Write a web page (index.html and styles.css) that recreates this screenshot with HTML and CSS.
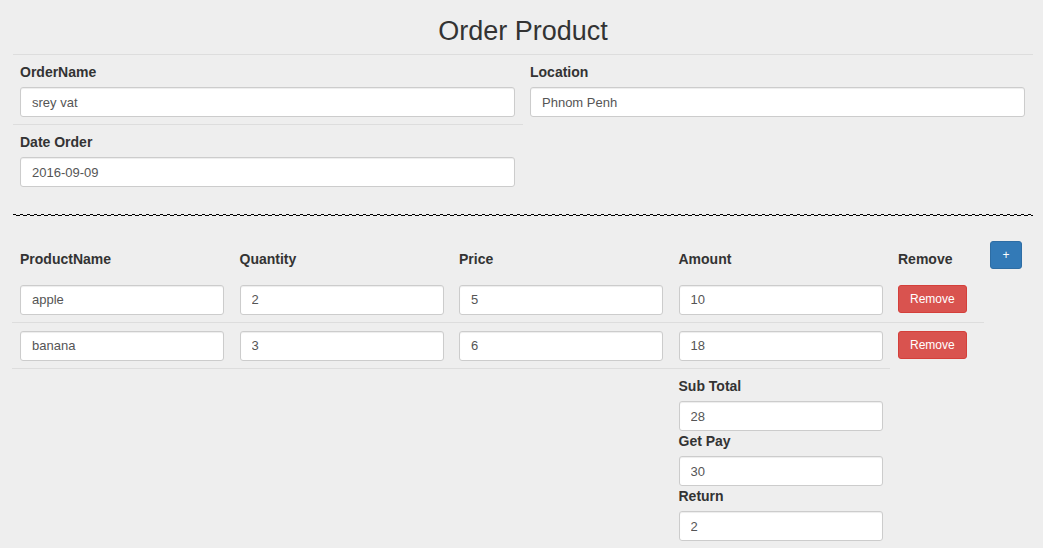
FILE: index.html
```html
<!DOCTYPE html>
<html lang="en">
<head>
<meta charset="utf-8">
<title>Order Product</title>
<link rel="stylesheet" href="styles.css">
</head>
<body>
<div class="page">
  <h2 class="title">Order Product</h2>

  <div class="order-grid">
    <div class="col">
      <div class="field field-sep">
        <label class="lbl">OrderName</label>
        <input class="inp" type="text" value="srey vat">
      </div>
      <div class="field">
        <label class="lbl">Date Order</label>
        <input class="inp" type="text" value="2016-09-09">
      </div>
    </div>
    <div class="col">
      <div class="field">
        <label class="lbl">Location</label>
        <input class="inp" type="text" value="Phnom Penh">
      </div>
    </div>
  </div>

  <div class="wave"></div>

  <div class="items">
    <div class="grid">
      <div class="th">ProductName</div>
      <div class="th">Quantity</div>
      <div class="th">Price</div>
      <div class="th">Amount</div>
      <div class="th">Remove</div>

      <div class="td row1"><input class="inp" type="text" value="apple"></div>
      <div class="td row1"><input class="inp" type="text" value="2"></div>
      <div class="td row1"><input class="inp" type="text" value="5"></div>
      <div class="td row1"><input class="inp" type="text" value="10"></div>
      <div class="td row1"><button class="btn btn-danger" type="button">Remove</button></div>

      <div class="td row2 bl"><input class="inp" type="text" value="banana"></div>
      <div class="td row2 bl"><input class="inp" type="text" value="3"></div>
      <div class="td row2 bl"><input class="inp" type="text" value="6"></div>
      <div class="td row2 bl"><input class="inp" type="text" value="18"></div>
      <div class="td row2"><button class="btn btn-danger" type="button">Remove</button></div>

      <div class="summary">
        <div class="sum-group">
          <label class="lbl">Sub Total</label>
          <input class="inp" type="text" value="28">
        </div>
        <div class="sum-group">
          <label class="lbl">Get Pay</label>
          <input class="inp" type="text" value="30">
        </div>
        <div class="sum-group">
          <label class="lbl">Return</label>
          <input class="inp" type="text" value="2">
        </div>
      </div>
    </div>
    <button class="btn btn-primary add" type="button">+</button>
  </div>
</div>
</body>
</html>
```

FILE: styles.css
```css
html, body {
  margin: 0;
  padding: 0;
}
body {
  background: #eeeeee;
  color: #333333;
  font-family: "Liberation Sans", Arial, Helvetica, sans-serif;
  font-size: 14px;
  line-height: 20px;
}
.page {
  padding: 0 10px 0 13px;
}
.title {
  margin: 0;
  padding: 15px 0 6px;
  font-size: 27px;
  line-height: 33px;
  font-weight: 400;
  text-align: center;
  border-bottom: 1px solid #dddddd;
}
.order-grid {
  display: grid;
  grid-template-columns: 510px 510px;
}
.field {
  padding: 7px 8px 0 7px;
}
.field-sep {
  padding-bottom: 7px;
  border-bottom: 1px solid #dddddd;
}
.lbl {
  display: block;
  font-weight: 700;
  font-size: 14px;
  line-height: 20px;
  margin-bottom: 5px;
}
.inp {
  display: block;
  box-sizing: border-box;
  width: 100%;
  height: 30px;
  padding: 0 11px;
  margin: 0;
  font-family: "Liberation Sans", Arial, Helvetica, sans-serif;
  font-size: 13px;
  color: #555555;
  background: #ffffff;
  border: 1px solid #cccccc;
  border-radius: 3px;
  box-shadow: inset 0 1px 1px rgba(0, 0, 0, 0.075);
  outline: none;
}
.wave {
  height: 2px;
  margin-top: 27px;
  background-image:
    linear-gradient(to right, #000000 50%, transparent 50%),
    linear-gradient(to right, transparent 50%, #000000 50%);
  background-size: 7px 1px, 7px 1px;
  background-position: 0 0, 0 1px;
  background-repeat: repeat-x;
}
.items {
  display: flex;
  align-items: flex-start;
  margin-top: 25px;
  margin-left: -1px;
}
.grid {
  display: grid;
  grid-template-columns: 219.5px 219.5px 219.5px 219.5px 94px;
  width: 972px;
}
.th {
  padding: 8px 0 8px 8px;
  font-weight: 700;
  line-height: 20px;
}
.td {
  padding: 7.5px 7.5px 7.5px 8px;
}
.td .inp {
  width: 204px;
}
.row1 {
  border-bottom: 1px solid #dddddd;
}
.bl {
  border-bottom: 1px solid #dddddd;
}
.summary {
  grid-column: 4;
  padding: 7px 0 0 8px;
}
.sum-group .inp {
  width: 204px;
}
.btn {
  display: inline-block;
  box-sizing: border-box;
  height: 28px;
  margin: 0;
  font-family: "Liberation Sans", Arial, Helvetica, sans-serif;
  font-size: 12px;
  line-height: 26px;
  color: #ffffff;
  border: 1px solid transparent;
  border-radius: 3px;
  cursor: pointer;
}
.btn-danger {
  padding: 0 11px;
  background: #d9534f;
  border-color: #d43f3a;
}
.btn-primary {
  background: #337ab7;
  border-color: #2e6da4;
}
.add {
  width: 32px;
  padding: 0;
  margin-left: 6px;
}
```
